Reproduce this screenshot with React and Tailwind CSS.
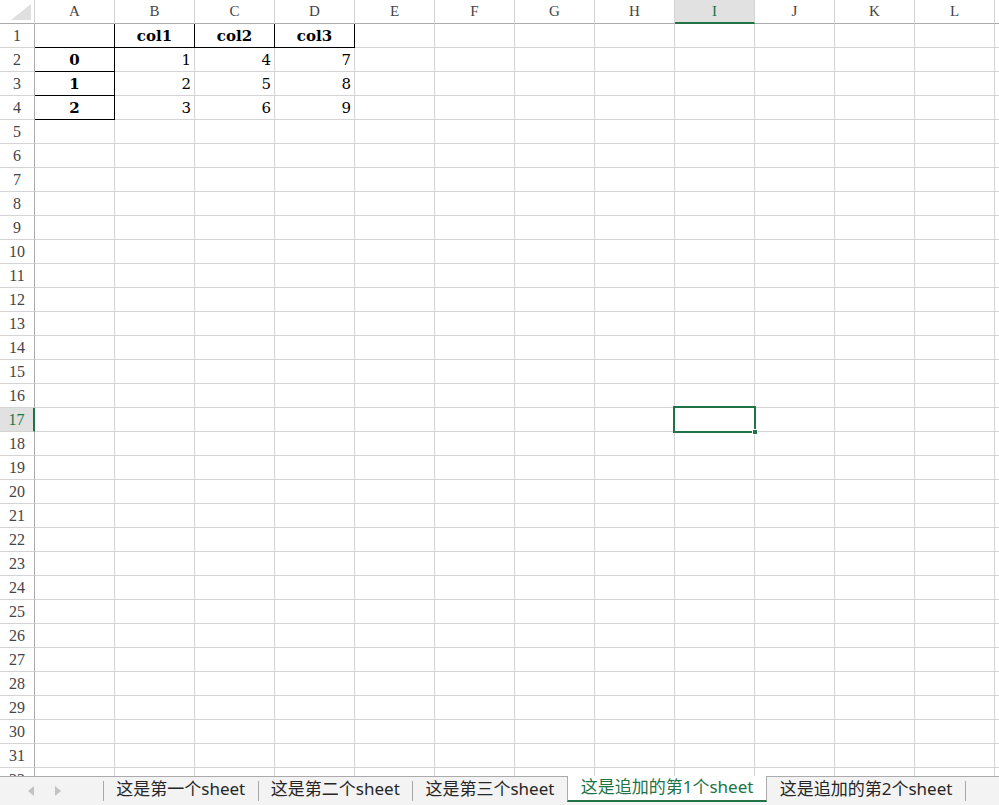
import React from 'react';

const cols = ['A', 'B', 'C', 'D', 'E', 'F', 'G', 'H', 'I', 'J', 'K', 'L', ''];
const rowCount = 33;

const data = {
  1: ['', 'col1', 'col2', 'col3'],
  2: ['0', '1', '4', '7'],
  3: ['1', '2', '5', '8'],
  4: ['2', '3', '6', '9'],
};

const serif = { fontFamily: '"Liberation Serif", "DejaVu Serif", serif' };
const cellFont = { fontFamily: '"DejaVu Serif", "Liberation Serif", serif' };

function isBlack(row, col) {
  if (row === 1 && col <= 3) return true;
  if (row >= 2 && row <= 4 && col === 0) return true;
  return false;
}

function DataCell({ row, col }) {
  const value = data[row] ? data[row][col] : undefined;
  const bold = row === 1 || col === 0;
  const selected = row === 17 && col === 8;
  return (
    <div
      className={`relative w-[80px] h-[24px] shrink-0 border-r border-b flex items-center pt-[2px] text-[15px] text-black ${
        isBlack(row, col) ? 'border-black' : 'border-[#d4d4d4]'
      } ${bold ? 'justify-center font-bold' : 'justify-end pr-[3px]'}`}
      style={cellFont}
    >
      {value}
      {selected && (
        <>
          <div className="absolute -left-[2px] -top-[2px] w-[83px] h-[27px] border-2 border-[#217346] z-10" />
          <div className="absolute left-[77px] top-[21px] w-[6px] h-[6px] bg-[#217346] border border-white z-20" />
        </>
      )}
    </div>
  );
}

function TabSep() {
  return <div className="w-px h-[20px] mt-[4px] bg-[#a8a8a8] shrink-0" />;
}

function Tab({ label, active }) {
  if (active) {
    return (
      <div className="-mt-px h-[26px] px-[13px] pb-[2px] bg-white border-l border-r border-[#ababab] border-b-2 border-b-[#217346] flex items-center text-[17px] text-[#217346] shrink-0 whitespace-nowrap">
        {label}
      </div>
    );
  }
  return (
    <div className="h-[23px] px-[12.3px] flex items-center text-[17px] text-[#262626] shrink-0 whitespace-nowrap">
      {label}
    </div>
  );
}

export default function App() {
  const rows = Array.from({ length: rowCount }, (_, i) => i + 1);

  return (
    <div className="w-[999px] h-[805px] flex flex-col overflow-hidden bg-white">
      <div className="h-[776px] overflow-hidden shrink-0" style={serif}>
        {/* column headers */}
        <div className="flex h-[24px]">
          <div className="w-[35px] h-[24px] shrink-0 border-r border-b border-r-[#d4d4d4] border-b-[#ababab] flex items-end justify-end p-[3px]">
            <svg width="20" height="16" viewBox="0 0 20 16">
              <polygon points="0,16 20,16 20,0" fill="#dfdfdf" />
            </svg>
          </div>
          {cols.map((c, i) =>
            i === 8 ? (
              <div
                key={i}
                className="w-[80px] h-[24px] shrink-0 border-r border-r-[#d4d4d4] border-b-2 border-b-[#217346] bg-[#e1e1e1] flex items-center justify-center text-[15px] text-[#217346]"
              >
                {c}
              </div>
            ) : (
              <div
                key={i}
                className="w-[80px] h-[24px] shrink-0 border-r border-b border-r-[#d4d4d4] border-b-[#ababab] flex items-center justify-center text-[15px] text-[#444]"
              >
                {c}
              </div>
            )
          )}
        </div>

        {rows.map((r) => (
          <div key={r} className="flex h-[24px]">
            {r === 17 ? (
              <div className="w-[35px] h-[24px] shrink-0 border-r-2 border-b border-r-[#217346] border-b-[#d4d4d4] bg-[#e1e1e1] flex items-center justify-center pt-[1px] text-[16px] text-[#217346]">
                {r}
              </div>
            ) : (
              <div className="w-[35px] h-[24px] shrink-0 border-r border-b border-r-[#ababab] border-b-[#d4d4d4] flex items-center justify-center pt-[1px] text-[16px] text-[#444]">
                {r}
              </div>
            )}
            {cols.map((c, i) => (
              <DataCell key={i} row={r} col={i} />
            ))}
          </div>
        ))}
      </div>

      <div
        className="h-[29px] shrink-0 border-t border-[#ababab] bg-[#f3f3f3] flex items-start"
        style={{ fontFamily: '"Noto Sans", "Noto Sans CJK SC", sans-serif' }}
      >
        <div className="w-[103px] h-[28px] shrink-0 flex items-center">
          <svg width="6" height="10" viewBox="0 0 6 10" className="ml-[28px]">
            <polygon points="6,0 6,10 0,5" fill="#c2c2c2" />
          </svg>
          <svg width="6" height="10" viewBox="0 0 6 10" className="ml-[21px]">
            <polygon points="0,0 0,10 6,5" fill="#c2c2c2" />
          </svg>
        </div>
        <TabSep />
        <Tab label="这是第一个sheet" />
        <TabSep />
        <Tab label="这是第二个sheet" />
        <TabSep />
        <Tab label="这是第三个sheet" />
        <Tab label="这是追加的第1个sheet" active />
        <Tab label="这是追加的第2个sheet" />
        <TabSep />
      </div>
    </div>
  );
}
